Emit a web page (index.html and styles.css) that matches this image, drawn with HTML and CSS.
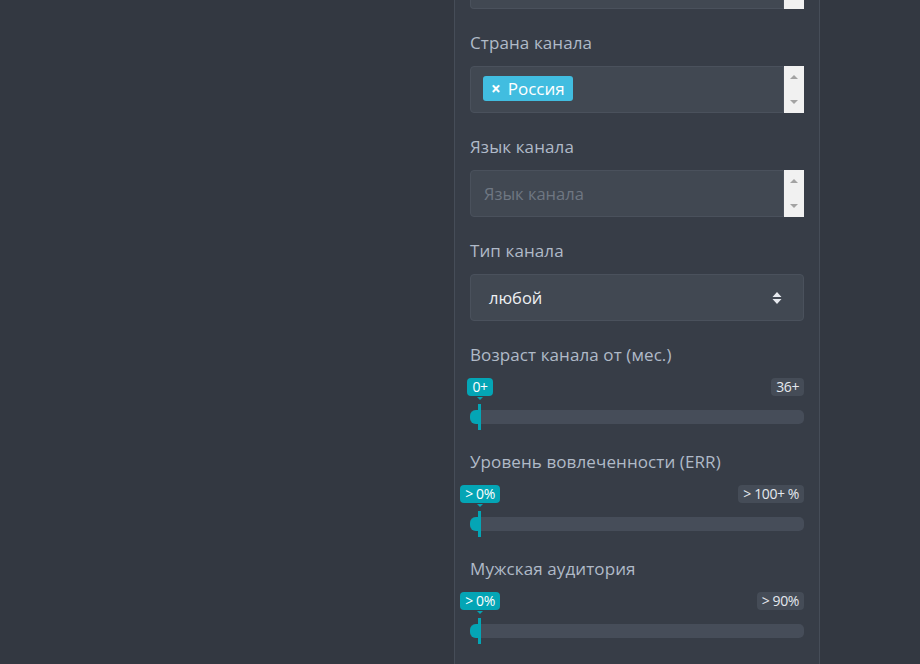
FILE: index.html
```html
<!DOCTYPE html>
<html lang="ru">
<head>
<meta charset="utf-8">
<title>Фильтры</title>
<link rel="stylesheet" href="styles.css">
</head>
<body>
<div class="page">
  <aside class="panel">
    <div class="field field-tail">
      <div class="box"></div>
      <div class="scroll"></div>
    </div>

    <div class="group">
      <div class="label">Страна канала</div>
      <div class="field">
        <div class="box">
          <span class="tag"><span class="tag-x">×</span>Россия</span>
        </div>
        <div class="scroll"><span class="arr up"></span><span class="arr down"></span></div>
      </div>
    </div>

    <div class="group">
      <div class="label">Язык канала</div>
      <div class="field">
        <div class="box"><span class="placeholder">Язык канала</span></div>
        <div class="scroll"><span class="arr up"></span><span class="arr down"></span></div>
      </div>
    </div>

    <div class="group">
      <div class="label">Тип канала</div>
      <div class="select">
        <span>любой</span>
        <svg class="caret" width="10" height="14" viewBox="0 0 10 14"><path d="M5 1 L9.5 6 H0.5 Z M5 13 L9.5 8 H0.5 Z" fill="#e6e9ee"/></svg>
      </div>
    </div>

    <div class="group slider-group">
      <div class="label">Возраст канала от (мес.)</div>
      <div class="range">
        <div class="badges">
          <div class="anchor"><span class="badge cur">0+</span></div>
          <span class="badge max">36+</span>
        </div>
        <div class="track"><span class="fill"></span><span class="knob"></span></div>
      </div>
    </div>

    <div class="group slider-group">
      <div class="label">Уровень вовлеченности (ERR)</div>
      <div class="range">
        <div class="badges">
          <div class="anchor"><span class="badge cur">&gt; 0%</span></div>
          <span class="badge max">&gt; 100+ %</span>
        </div>
        <div class="track"><span class="fill"></span><span class="knob"></span></div>
      </div>
    </div>

    <div class="group slider-group">
      <div class="label">Мужская аудитория</div>
      <div class="range">
        <div class="badges">
          <div class="anchor"><span class="badge cur">&gt; 0%</span></div>
          <span class="badge max">&gt; 90%</span>
        </div>
        <div class="track"><span class="fill"></span><span class="knob"></span></div>
      </div>
    </div>
  </aside>
</div>
</body>
</html>
```
FILE: styles.css
```css
html, body {
  margin: 0;
  padding: 0;
  height: 100%;
  background: #333841;
  overflow: hidden;
}
body {
  font-family: "Open Sans", "Noto Sans", sans-serif;
  -webkit-font-smoothing: antialiased;
}
.page {
  display: flex;
  height: 100%;
  padding-left: 454px;
}
.panel {
  width: 334px;
  padding: 0 15px;
  background: #373d47;
  border-left: 1px solid #464d58;
  border-right: 1px solid #464d58;
  min-height: 100%;
}
.group {
  margin-top: 22px;
}
.label {
  font-size: 17px;
  line-height: 24px;
  color: #b0bac8;
  margin-bottom: 11px;
  letter-spacing: 0.1px;
}
.field {
  display: flex;
  height: 47px;
}
.field .box {
  flex: 1;
  background: #414852;
  border: 1px solid #4a515c;
  border-radius: 4px 0 0 4px;
  display: flex;
  align-items: center;
  padding: 0 12px;
}
.field-tail {
  height: 9px;
}
.field-tail .box {
  border-top: none;
  border-radius: 0 0 0 4px;
}
.scroll {
  width: 20px;
  background: #f1f1f1;
  position: relative;
  flex: none;
}
.arr {
  position: absolute;
  left: 6px;
  width: 0;
  height: 0;
  border-left: 4px solid transparent;
  border-right: 4px solid transparent;
}
.arr.up {
  top: 9px;
  border-bottom: 4px solid #a3a3a3;
}
.arr.down {
  bottom: 9px;
  border-top: 4px solid #a3a3a3;
}
.tag {
  display: inline-flex;
  align-items: center;
  height: 25px;
  padding: 0 8px 0 8px;
  background: #41bde0;
  color: #ffffff;
  border-radius: 3px;
  font-size: 17px;
  margin-top: -2px;
}
.tag-x {
  font-weight: 700;
  font-size: 17px;
  margin-right: 7px;
}
.placeholder {
  color: #6f7782;
  font-size: 16.5px;
  padding-left: 1px;
}
.select {
  height: 45px;
  background: #414852;
  border: 1px solid #4a515c;
  border-radius: 4px;
  display: flex;
  align-items: center;
  justify-content: space-between;
  padding: 0 21px 0 18px;
  color: #eef0f3;
  font-size: 16.5px;
}
.caret {
  display: block;
}
.slider-group {
  padding-bottom: 4px;
}
.range {
  width: 100%;
}
.badges {
  display: flex;
  justify-content: space-between;
  align-items: flex-start;
  height: 18px;
  margin-bottom: 14px;
}
.anchor {
  width: 20px;
  display: flex;
  justify-content: center;
  position: relative;
}
.badge {
  flex: none;
  height: 18px;
  line-height: 18px;
  padding: 0 5px;
  border-radius: 4px;
  font-size: 14px;
  white-space: nowrap;
  letter-spacing: -0.4px;
}
.badge.cur {
  background: #04a5b5;
  color: #ffffff;
  position: relative;
}
.badge.cur::after {
  content: "";
  position: absolute;
  left: 50%;
  top: 19px;
  margin-left: -3px;
  border-left: 3px solid transparent;
  border-right: 3px solid transparent;
  border-top: 3px solid #04a5b5;
}
.badge.max {
  background: #454c57;
  color: #e4e8ee;
}
.track {
  position: relative;
  height: 14px;
  border-radius: 5px;
  background: #464d59;
}
.fill {
  position: absolute;
  left: 0;
  top: 0;
  width: 10px;
  height: 14px;
  border-radius: 6px 0 0 6px;
  background: #04a5b5;
}
.knob {
  position: absolute;
  left: 8px;
  top: -6px;
  width: 3px;
  height: 26px;
  background: #04a5b5;
}
```
